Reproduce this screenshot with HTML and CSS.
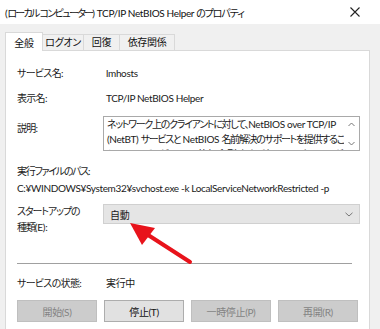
FILE: index.html
```html
<!DOCTYPE html>
<html lang="ja">
<head>
<meta charset="utf-8">
<link rel="stylesheet" href="styles.css">
</head>
<body>
<div class="window">
  <div class="titlebar">
    <span class="title">(<span class="ja-tight">ローカル コンピューター</span>) TCP/IP NetBIOS Helper <span class="ja">のプロパティ</span></span>
    <svg class="close" width="12" height="12" viewBox="0 0 12 12"><path d="M1.5 1.5 L10.5 10.5 M10.5 1.5 L1.5 10.5" stroke="#222" stroke-width="1.1" fill="none"/></svg>
  </div>
  <div class="body">
    <div class="tabs">
      <div class="tab active">全般</div>
      <div class="tab">ログオン</div>
      <div class="tab">回復</div>
      <div class="tab">依存関係</div>
    </div>
    <div class="panel">
      <div class="row r1"><span class="label">サービス名:</span><span class="value">lmhosts</span></div>
      <div class="row r2"><span class="label">表示名:</span><span class="value">TCP/IP NetBIOS Helper</span></div>
      <div class="row r3">
        <span class="label lab-desc">説明:</span>
        <div class="textbox">
          <div class="tb-text"><span class="ja">ネットワーク上のクライアントに対して、</span>NetBIOS over TCP/IP<br>(NetBT) <span class="ja">サービスと</span> NetBIOS <span class="ja">名前解決のサポートを提供するこ</span><br><span class="ja">とで、ユーザーがファイル共有、印刷、およびネットワークへのログ</span></div>
          <div class="tb-scroll">
            <svg width="7" height="5" viewBox="0 0 7 5"><path d="M0.5 4 L3.5 1 L6.5 4" stroke="#777" stroke-width="1" fill="none"/></svg>
            <svg width="7" height="5" viewBox="0 0 7 5"><path d="M0.5 1 L3.5 4 L6.5 1" stroke="#777" stroke-width="1" fill="none"/></svg>
          </div>
        </div>
      </div>
      <div class="line r4">実行ファイルのパス:</div>
      <div class="line r5">C:¥WINDOWS¥System32¥svchost.exe -k LocalServiceNetworkRestricted -p</div>
      <div class="row r6">
        <span class="label lab-start"><span class="ja">スタートアップの</span><br><span class="ja">種類</span>(E):</span>
        <div class="select"><span>自動</span>
          <svg width="8" height="5" viewBox="0 0 8 5"><path d="M0.5 0.8 L4 4 L7.5 0.8" stroke="#777" stroke-width="1" fill="none"/></svg>
        </div>
      </div>
      <div class="sep"></div>
      <div class="row r7"><span class="label">サービスの状態:</span><span class="value">実行中</span></div>
      <div class="buttons">
        <div class="btn disabled">開始(S)</div>
        <div class="btn">停止(T)</div>
        <div class="btn disabled">一時停止(P)</div>
        <div class="btn disabled">再開(R)</div>
      </div>
    </div>
  </div>
  <svg class="arrow" width="380" height="329" viewBox="0 0 380 329">
    <line x1="190" y1="262" x2="145" y2="233" stroke="#e8131b" stroke-width="4" stroke-linecap="round"/>
    <polygon points="130,223 155,228 142,245" fill="#e8131b"/>
  </svg>
</div>
</body>
</html>
```
FILE: styles.css
```css
* { box-sizing: border-box; }
html, body { margin: 0; padding: 0; }
body {
  width: 380px;
  height: 329px;
  overflow: hidden;
  background: #f0f0f0;
  font-family: "Lato", "Noto Sans CJK JP", "Noto Sans", sans-serif;
  font-size: 10px;
  font-feature-settings: "palt";
  letter-spacing: -0.35px;
  color: #1a1a1a;
}
.ja { letter-spacing: -1.1px; }
.ja-tight { letter-spacing: -1.7px; }
.window { position: relative; width: 380px; height: 329px; }
.titlebar {
  height: 24px;
  background: #ffffff;
  display: flex;
  align-items: center;
  justify-content: space-between;
  padding: 0 19px 0 5px;
}
.title { font-size: 10px; color: #111; }
.close { display: block; }
.body { padding: 8px 10px 0 5px; }
.tabs { display: flex; align-items: flex-end; height: 18px; }
.tab {
  height: 16px;
  line-height: 15px;
  background: #f0f0f0;
  border: 1px solid #d9d9d9;
  border-bottom: none;
  margin-left: -1px;
  color: #111;
  text-align: center;
}
.tab.active {
  width: 38px;
  height: 19px;
  margin-bottom: -1px;
  background: #ffffff;
  line-height: 20px;
  margin-left: 0;
  position: relative;
  z-index: 1;
}
.tab:nth-child(2) { width: 42px; }
.tab:nth-child(3) { width: 37px; }
.tab:nth-child(4) { width: 56px; }
.panel {
  background: #ffffff;
  border: 1px solid #d9d9d9;
  height: 290px;
  padding: 14px 0 0 11px;
}
.row { display: flex; align-items: flex-start; }
.label { width: 86px; flex: none; line-height: 16px; letter-spacing: -0.7px; }
.lab-start { letter-spacing: -0.2px; }
.value { line-height: 16px; padding-left: 3px; }
.r1 { height: 16px; }
.r2 { height: 16px; margin-top: 9px; }
.r3 { margin-top: 10px; height: 35px; }
.lab-desc { padding-top: 4px; }
.textbox {
  width: 257px;
  height: 35px;
  border: 1px solid #a9a9a9;
  display: flex;
  overflow: hidden;
}
.tb-text {
  flex: 1;
  padding: 0 0 0 3px;
  line-height: 15px;
  white-space: nowrap;
  overflow: hidden;
}
.tb-text .ja { letter-spacing: -1.3px; }
.tb-scroll {
  width: 15px;
  flex: none;
  display: flex;
  flex-direction: column;
  justify-content: space-between;
  align-items: center;
  padding: 5px 0 4px;
}
.tb-scroll svg { display: block; }
.line { line-height: 16px; }
.r4 { margin-top: 12px; letter-spacing: -1.3px; }
.r5 { margin-top: 1px; }
.r6 { margin-top: 7px; height: 33px; }
.select {
  width: 257px;
  height: 20px;
  margin-top: 1px;
  background: #e5e5e5;
  border: 1px solid #d0d0d0;
  display: flex;
  align-items: center;
  justify-content: space-between;
  padding: 0 6px 0 6px;
}
.select svg { display: block; }
.sep {
  margin-top: 27px;
  width: 335px;
  height: 1px;
  background: #a0a0a0;
}
.r7 { margin-top: 11px; height: 16px; }
.buttons {
  margin-top: 9px;
  display: grid;
  grid-template-columns: repeat(4, 80px);
  column-gap: 7px;
}
.btn {
  height: 22px;
  display: flex;
  align-items: center;
  justify-content: center;
  background: #e1e1e1;
  border: 1px solid #adadad;
  color: #111;
}
.btn.disabled {
  background: #cccccc;
  border-color: #bfbfbf;
  color: #838383;
}
.arrow { position: absolute; left: 0; top: 0; pointer-events: none; }
```
